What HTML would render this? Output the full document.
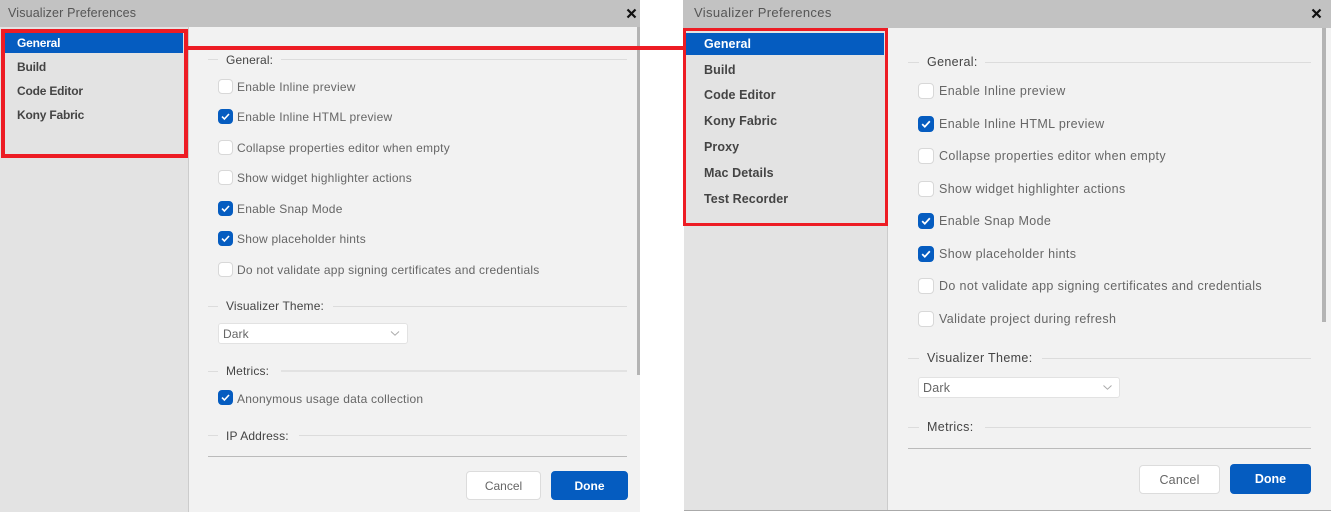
<!DOCTYPE html>
<html><head><meta charset="utf-8"><style>
html,body{margin:0;padding:0;width:1331px;height:512px;overflow:hidden;background:#fff}
body{position:relative;font-family:"Liberation Sans",sans-serif}
div,svg{position:absolute;box-sizing:border-box}
.t{white-space:nowrap;line-height:16px;height:16px}
.l{font-size:12px;letter-spacing:.22px;color:#666}
.h{font-size:12px;letter-spacing:.14px;color:#444}
.n{font-size:12px;font-weight:bold;letter-spacing:-.2px;color:#444;left:17px}
.L{font-size:12.5px;letter-spacing:.37px;color:#666;left:939px}
.H{font-size:12.5px;letter-spacing:.35px;color:#444}
.N{font-size:12.5px;font-weight:bold;letter-spacing:.08px;color:#444;left:704px}
.r{height:1px;background:#dcdcdc}
.c{width:15px;height:15px;border-radius:4px;background:#fff;border:1px solid #d8d8d8;left:218px}
.C{width:16px;height:16px;border-radius:4px;background:#fff;border:1px solid #d8d8d8;left:918px}
.k{background:#055cc0;border-color:#055cc0}
.k svg{left:1px;top:1px}
.b{border-radius:4px;text-align:center;font-size:12px;line-height:28px}
</style></head><body>

<!-- LEFT DIALOG -->
<div style="left:0;top:0;width:640px;height:512px;background:#f2f2f2"></div>
<div style="left:0;top:0;width:640px;height:27px;background:#c2c2c2"></div>
<div class="t" style="left:8px;top:5px;font-size:12.5px;letter-spacing:.15px;color:#555">Visualizer Preferences</div>
<svg style="left:626px;top:8px" width="11" height="11" viewBox="0 0 11 11"><path d="M1.5 1.5L9.5 9.5M9.5 1.5L1.5 9.5" stroke="#111" stroke-width="2.2" fill="none"/></svg>
<div style="left:0;top:27px;width:189px;height:485px;background:#e3e3e3;border-right:1px solid #ccc"></div>
<div style="left:637px;top:27px;width:3px;height:348px;background:#b4b4b4"></div>
<div style="left:5px;top:33px;width:178px;height:20px;background:#055cc0"></div>
<div style="left:1px;top:29px;width:187px;height:129px;border:4px solid #ed1c24"></div>
<div class="t n" style="top:35px;color:#fff">General</div>
<div class="t n" style="top:59px">Build</div>
<div class="t n" style="top:83px">Code Editor</div>
<div class="t n" style="top:107px">Kony Fabric</div>

<div class="r" style="left:208px;top:59px;width:10px"></div>
<div class="t h" style="left:226px;top:52px">General:</div>
<div class="r" style="left:281px;top:59px;width:346px"></div>

<div class="c" style="top:79px"></div>
<div class="t l" style="left:237px;top:79px">Enable Inline preview</div>
<div class="c k" style="top:109px"><svg width="11" height="11" viewBox="0 0 11 11"><path d="M2 5.6L4.4 8L9 3" stroke="#fff" stroke-width="1.6" fill="none"/></svg></div>
<div class="t l" style="left:237px;top:109px">Enable Inline HTML preview</div>
<div class="c" style="top:140px"></div>
<div class="t l" style="left:237px;top:140px">Collapse properties editor when empty</div>
<div class="c" style="top:170px"></div>
<div class="t l" style="left:237px;top:170px">Show widget highlighter actions</div>
<div class="c k" style="top:201px"><svg width="11" height="11" viewBox="0 0 11 11"><path d="M2 5.6L4.4 8L9 3" stroke="#fff" stroke-width="1.6" fill="none"/></svg></div>
<div class="t l" style="left:237px;top:201px">Enable Snap Mode</div>
<div class="c k" style="top:231px"><svg width="11" height="11" viewBox="0 0 11 11"><path d="M2 5.6L4.4 8L9 3" stroke="#fff" stroke-width="1.6" fill="none"/></svg></div>
<div class="t l" style="left:237px;top:231px">Show placeholder hints</div>
<div class="c" style="top:262px"></div>
<div class="t l" style="left:237px;top:262px">Do not validate app signing certificates and credentials</div>

<div class="r" style="left:208px;top:306px;width:10px"></div>
<div class="t h" style="left:226px;top:298px">Visualizer Theme:</div>
<div class="r" style="left:333px;top:306px;width:294px"></div>
<div style="left:218px;top:323px;width:190px;height:21px;background:#fff;border:1px solid #e2e2e2;border-radius:3px"></div>
<div class="t" style="left:223px;top:326px;font-size:12px;letter-spacing:.1px;color:#666">Dark</div>
<svg style="left:390px;top:330px" width="10" height="7" viewBox="0 0 10 7"><path d="M1 1.5L5 5.2L9 1.5" stroke="#aaa" stroke-width="1" fill="none"/></svg>

<div class="r" style="left:208px;top:371px;width:10px"></div>
<div class="t h" style="left:226px;top:363px">Metrics:</div>
<div class="r" style="left:281px;top:370px;width:346px;height:2px;background:#e2e2e2"></div>
<div class="c k" style="top:390px"><svg width="11" height="11" viewBox="0 0 11 11"><path d="M2 5.6L4.4 8L9 3" stroke="#fff" stroke-width="1.6" fill="none"/></svg></div>
<div class="t l" style="left:237px;top:391px">Anonymous usage data collection</div>

<div class="r" style="left:208px;top:435px;width:10px"></div>
<div class="t h" style="left:226px;top:428px">IP Address:</div>
<div class="r" style="left:299px;top:435px;width:328px"></div>
<div class="r" style="left:208px;top:456px;width:419px;background:#bbb"></div>
<div class="b" style="left:466px;top:471px;width:75px;height:29px;background:#fff;border:1px solid #dcdcdc;color:#666">Cancel</div>
<div class="b" style="left:551px;top:471px;width:77px;height:29px;background:#055cc0;color:#fff;font-weight:bold;border:1px solid #055cc0">Done</div>

<!-- CONNECTOR -->
<div style="left:188px;top:46px;width:497px;height:4px;background:#ed1c24"></div>

<!-- RIGHT DIALOG -->
<div style="left:684px;top:0;width:647px;height:511px;background:#f2f2f2;border-bottom:1px solid #aaa"></div>
<div style="left:683px;top:0;width:648px;height:28px;background:#c2c2c2"></div>
<div class="t" style="left:694px;top:5px;font-size:13px;letter-spacing:.36px;color:#555">Visualizer Preferences</div>
<svg style="left:1311px;top:8px" width="11" height="11" viewBox="0 0 11 11"><path d="M1.5 1.5L9.5 9.5M9.5 1.5L1.5 9.5" stroke="#111" stroke-width="2.2" fill="none"/></svg>
<div style="left:684px;top:28px;width:204px;height:482px;background:#e3e3e3;border-right:1px solid #ccc"></div>
<div style="left:1322px;top:28px;width:4px;height:294px;background:#b4b4b4"></div>
<div style="left:686px;top:33px;width:198px;height:22px;background:#055cc0"></div>
<div style="left:683px;top:28px;width:205px;height:198px;border:3px solid #ed1c24"></div>
<div class="t N" style="top:36px;color:#fff">General</div>
<div class="t N" style="top:62px">Build</div>
<div class="t N" style="top:87px">Code Editor</div>
<div class="t N" style="top:113px">Kony Fabric</div>
<div class="t N" style="top:139px">Proxy</div>
<div class="t N" style="top:165px">Mac Details</div>
<div class="t N" style="top:191px">Test Recorder</div>

<div class="r" style="left:908px;top:62px;width:11px"></div>
<div class="t H" style="left:927px;top:54px">General:</div>
<div class="r" style="left:985px;top:62px;width:326px"></div>

<div class="C" style="top:83px"></div>
<div class="t L" style="top:83px">Enable Inline preview</div>
<div class="C k" style="top:116px"><svg width="12" height="12" viewBox="0 0 11 11"><path d="M2 5.6L4.4 8L9 3" stroke="#fff" stroke-width="1.6" fill="none"/></svg></div>
<div class="t L" style="top:116px">Enable Inline HTML preview</div>
<div class="C" style="top:148px"></div>
<div class="t L" style="top:148px">Collapse properties editor when empty</div>
<div class="C" style="top:181px"></div>
<div class="t L" style="top:181px">Show widget highlighter actions</div>
<div class="C k" style="top:213px"><svg width="12" height="12" viewBox="0 0 11 11"><path d="M2 5.6L4.4 8L9 3" stroke="#fff" stroke-width="1.6" fill="none"/></svg></div>
<div class="t L" style="top:213px">Enable Snap Mode</div>
<div class="C k" style="top:246px"><svg width="12" height="12" viewBox="0 0 11 11"><path d="M2 5.6L4.4 8L9 3" stroke="#fff" stroke-width="1.6" fill="none"/></svg></div>
<div class="t L" style="top:246px">Show placeholder hints</div>
<div class="C" style="top:278px"></div>
<div class="t L" style="top:278px">Do not validate app signing certificates and credentials</div>
<div class="C" style="top:311px"></div>
<div class="t L" style="top:311px">Validate project during refresh</div>

<div class="r" style="left:908px;top:358px;width:11px"></div>
<div class="t H" style="left:927px;top:350px">Visualizer Theme:</div>
<div class="r" style="left:1042px;top:358px;width:269px"></div>
<div style="left:918px;top:377px;width:202px;height:21px;background:#fff;border:1px solid #e2e2e2;border-radius:3px"></div>
<div class="t" style="left:923px;top:380px;font-size:12.5px;letter-spacing:.2px;color:#666">Dark</div>
<svg style="left:1102px;top:384px" width="11" height="7" viewBox="0 0 11 7"><path d="M1.5 1.5L5.5 5.2L9.5 1.5" stroke="#aaa" stroke-width="1" fill="none"/></svg>

<div class="r" style="left:908px;top:427px;width:11px"></div>
<div class="t H" style="left:927px;top:419px">Metrics:</div>
<div class="r" style="left:985px;top:427px;width:326px"></div>
<div class="r" style="left:908px;top:448px;width:403px;background:#bbb"></div>
<div class="b" style="left:1139px;top:465px;width:81px;height:29px;background:#fff;border:1px solid #dcdcdc;color:#666;font-size:12.5px;letter-spacing:.2px">Cancel</div>
<div class="b" style="left:1230px;top:464px;width:81px;height:30px;background:#055cc0;color:#fff;font-weight:bold;font-size:12.5px;line-height:30px">Done</div>
</body></html>
